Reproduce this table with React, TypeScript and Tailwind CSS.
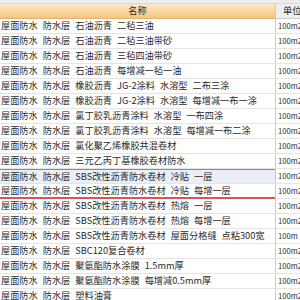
import React from 'react';

type Row = { name: string; unit: string; tone?: 'sel' | 'box' };

const ROWS: Row[] = [
    { name: '屋面防水 防水层 石油沥青 二毡三油', unit: '100m2' },
    { name: '屋面防水 防水层 石油沥青 二毡三油带砂', unit: '100m2' },
    { name: '屋面防水 防水层 石油沥青 三毡四油带砂', unit: '100m2' },
    { name: '屋面防水 防水层 石油沥青 每增减一毡一油', unit: '100m2' },
    { name: '屋面防水 防水层 橡胶沥青 JG-2涂料 水溶型 二布三涂', unit: '100m2' },
    { name: '屋面防水 防水层 橡胶沥青 JG-2涂料 水溶型 每增减一布一涂', unit: '100m2' },
    { name: '屋面防水 防水层 氯丁胶乳沥青涂料 水溶型 一布四涂', unit: '100m2' },
    { name: '屋面防水 防水层 氯丁胶乳沥青涂料 水溶型 每增减一布二涂', unit: '100m2' },
    { name: '屋面防水 防水层 氯化聚乙烯橡胶共混卷材', unit: '100m2' },
    { name: '屋面防水 防水层 三元乙丙丁基橡胶卷材防水', unit: '100m2' },
    { name: '屋面防水 防水层 SBS改性沥青防水卷材 冷贴 一层', unit: '100m2', tone: 'sel' },
    { name: '屋面防水 防水层 SBS改性沥青防水卷材 冷贴 每增一层', unit: '100m2', tone: 'box' },
    { name: '屋面防水 防水层 SBS改性沥青防水卷材 热熔 一层', unit: '100m2' },
    { name: '屋面防水 防水层 SBS改性沥青防水卷材 热熔 每增一层', unit: '100m2' },
    { name: '屋面防水 防水层 SBS改性沥青防水卷材 屋面分格缝 点粘300宽', unit: '100m' },
    { name: '屋面防水 防水层 SBC120复合卷材', unit: '100m2' },
    { name: '屋面防水 防水层 聚氨酯防水涂膜 1.5mm厚', unit: '100m2' },
    { name: '屋面防水 防水层 聚氨酯防水涂膜 每增减0.5mm厚', unit: '100m2' },
    { name: '屋面防水 防水层 塑料油膏', unit: '100m2' },
];

export default function App() {
    return (
        <div
            className="w-[300px] h-[300px] overflow-hidden bg-white text-[#2a2a2a] text-[9.2px] leading-none"
            style={{ fontFamily: '"Noto Sans CJK SC", "Noto Sans", sans-serif' }}
        >
            {/* top strip */}
            <div className="h-[4px] bg-[#eceeee] border-b border-[#d8dada]" />

            {/* header */}
            <div className="flex h-[15px] w-[340px]">
                <div className="w-[275px] shrink-0 flex items-center justify-center bg-gradient-to-b from-[#fde8c8] to-[#f6c47e] border-b border-[#e3b26c]">
                    名称
                </div>
                <div className="w-[65px] shrink-0 flex items-center pl-[7px] bg-[#eef0f0] border-l border-b border-[#c9cccc]">
                    单位
                </div>
            </div>

            {/* rows */}
            {ROWS.map((r, i) => (
                <div key={i} className="flex h-[15px] w-[340px]">
                    <div
                        className={`w-[275px] shrink-0 flex items-center gap-[5px] pl-[1px] whitespace-nowrap overflow-hidden ${
                            r.tone === 'sel'
                                ? 'bg-[#e9eef7] border-t border-t-[#d66a6a] border-b border-b-[#e4e4e4]'
                                : r.tone === 'box'
                                ? 'border-b-2 border-b-[#d4565c]'
                                : 'border-b border-[#e4e4e4]'
                        }`}
                    >
                        {r.name.split(' ').map((w, j) => (
                            <span key={j}>{w}</span>
                        ))}
                    </div>
                    <div className="w-[65px] shrink-0 flex items-center pl-[2px] border-l border-[#c9cccc] border-b border-b-[#e4e4e4] text-[7.6px]">
                        {r.unit}
                    </div>
                </div>
            ))}
        </div>
    );
}
